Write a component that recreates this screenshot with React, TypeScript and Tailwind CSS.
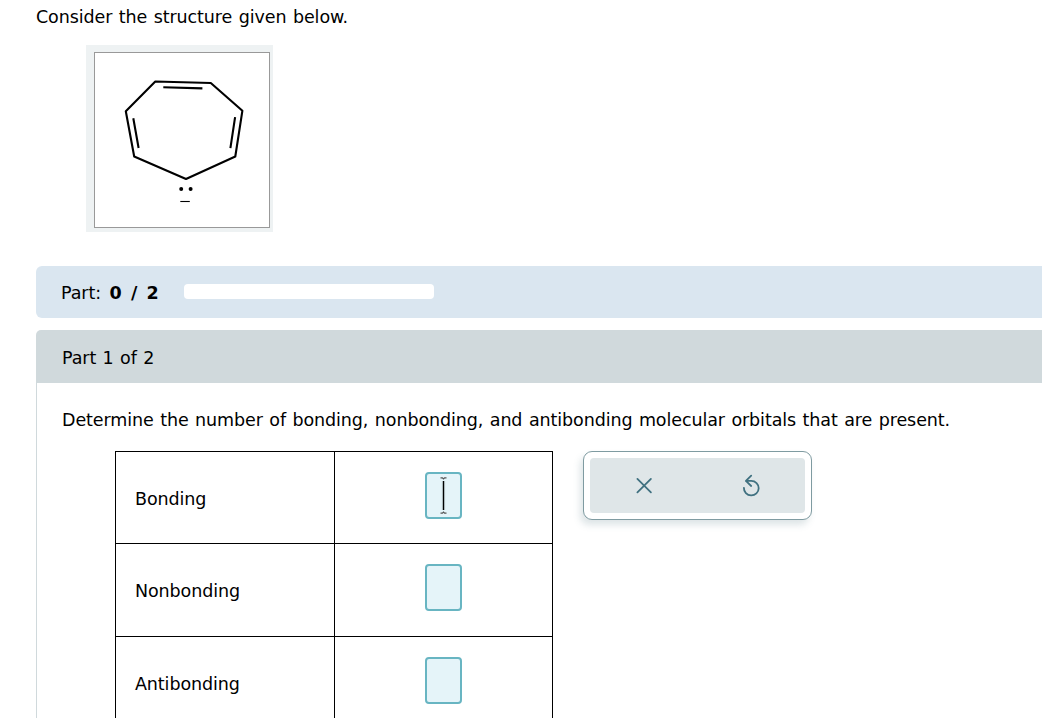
const rows = [
  { label: 'Bonding', height: 'h-[91px]', cursor: true },
  { label: 'Nonbonding', height: 'h-[92px]', cursor: false },
  { label: 'Antibonding', height: 'h-[92px]', cursor: false },
]

function Structure() {
  return (
    <div className="ml-[50px] h-[187px] w-[187px] bg-[#eef2f3] pt-[7px] pl-2">
      <div className="h-[176px] w-[176px] border border-[#999999] bg-white">
        <svg width="174" height="174" viewBox="95 53 174 174" fill="none" stroke="#000" strokeWidth="2.1" aria-label="Cycloheptatrienyl anion">
          <path strokeLinejoin="round" d="M155.3 81.5L210.8 83L242.4 110.7L235.3 156.5L186 179L134.2 156.5L125.8 111.3Z" />
          <path d="M163.3 87.3L202.4 88.4M235.1 117.2L230.4 148.2M133.3 118.2L138.6 148" />
          <circle cx="181.2" cy="189" r="2" fill="#000" stroke="none" />
          <circle cx="190.6" cy="189" r="2" fill="#000" stroke="none" />
          <path strokeWidth="1.1" d="M180.3 201.5H189.8" />
        </svg>
      </div>
    </div>
  )
}

function TextCursor() {
  return (
    <svg width="9" height="39" viewBox="0 0 9 39" fill="none">
      <path d="M3.4 5V34M5.6 5V34" stroke="#b9c7ca" />
      <path d="M4.5 5V34" stroke="#000" strokeWidth="1.2" />
      <path d="M1.5 1.8H3.4L4.5 2.9L5.6 1.8H7.5M1.5 37.2H3.4L4.5 36.1L5.6 37.2H7.5" stroke="#555" strokeWidth="1.2" />
    </svg>
  )
}

function AnswerTable() {
  return (
    <div className="w-[438px] border-x border-t border-black">
      {rows.map((row) => (
        <div key={row.label} className="flex border-b border-black">
          <div className={`flex w-[219px] items-center border-r border-black pt-[3px] pl-[19px] ${row.height}`}>
            {row.label}
          </div>
          <div className={`flex flex-1 justify-center pt-5 ${row.height}`}>
            <div className="flex h-[47px] w-[37px] items-center justify-center rounded-[4px] border-2 border-[#68b5c2] bg-[#e5f4f9]">
              {row.cursor && <TextCursor />}
            </div>
          </div>
        </div>
      ))}
    </div>
  )
}

function Toolbar() {
  return (
    <div className="ml-[30px] h-[69px] w-[229px] rounded-[9px] border border-[#7f9ba1] bg-white p-1.5 shadow-[-3px_5px_7px_rgba(70,110,120,0.18)]">
      <div className="flex h-[55px] rounded-[4px] bg-[#dfe6e8] text-[#407180]">
        <button className="flex w-1/2 items-center justify-center" aria-label="Clear">
          <svg width="18" height="18" viewBox="0 0 18 18" fill="none" stroke="currentColor" strokeWidth="1.8" strokeLinecap="round">
            <path d="M2.4 1.9L15.9 15.4M15.9 1.9L2.4 15.4" />
          </svg>
        </button>
        <button className="flex w-1/2 items-center justify-center" aria-label="Reset">
          <svg width="20" height="24" viewBox="0 0 20 24" fill="none" stroke="currentColor" strokeWidth="1.8" strokeLinecap="round" strokeLinejoin="round">
            <path d="M2.9 13.8A7.4 7.2 0 1 0 10.3 6.9H4.9M10.2 1.7L4.9 6.9L10.2 12" />
          </svg>
        </button>
      </div>
    </div>
  )
}

export default function App() {
  return (
    <div className="h-[718px] overflow-hidden bg-white pl-9 font-['DejaVu_Sans',sans-serif] text-[17.5px] tracking-[-0.1px] [word-spacing:1.05px] text-black">
      <p className="h-[45px] pt-1 leading-[26px]">Consider the structure given below.</p>
      <Structure />

      <div className="mt-[34px] flex h-[52px] items-center rounded-l-[6px] bg-[#dae6f0] pl-[25px]">
        <span className="w-[123px] pt-0.5 whitespace-nowrap">
          Part: <b className="ml-[2px] tracking-[0.4px] [word-spacing:2.4px]">0 / 2</b>
        </span>
        <div className="mb-px h-[15px] w-[250px] rounded-[4px] bg-white" />
      </div>

      <section className="mt-3">
        <h2 className="flex h-[53px] items-center rounded-tl-[5px] bg-[#d0d9dc] pt-[3px] pl-[26px] [word-spacing:1px]">Part 1 of 2</h2>
        <div className="h-[340px] border-l border-[#d0d9dc] pt-6">
          <p className="h-11 pl-[25px] leading-[26px] whitespace-nowrap">
            Determine the number of bonding, nonbonding, and antibonding molecular orbitals that are present.
          </p>
          <div className="flex items-start pl-[78px]">
            <AnswerTable />
            <Toolbar />
          </div>
        </div>
      </section>
    </div>
  )
}
